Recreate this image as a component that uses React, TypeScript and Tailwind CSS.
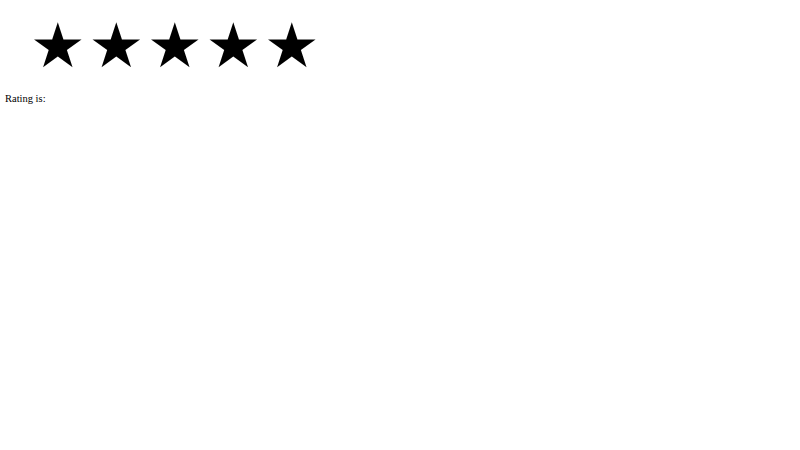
export default function App() {
  const stars = [1, 2, 3, 4, 5];
  return (
    <div className="min-h-screen bg-white text-black" style={{ fontFamily: '"Liberation Serif", serif' }}>
      <div className="flex pl-[30px] pt-[15px] leading-none">
        {stars.map((s) => (
          <span key={s} className="text-[62px] w-[58.5px]" style={{ fontFamily: '"DejaVu Sans", sans-serif' }}>
            ★
          </span>
        ))}
      </div>
      <p className="pl-[5px] pt-[14px] text-[10.5px]">Rating is:</p>
    </div>
  );
}
